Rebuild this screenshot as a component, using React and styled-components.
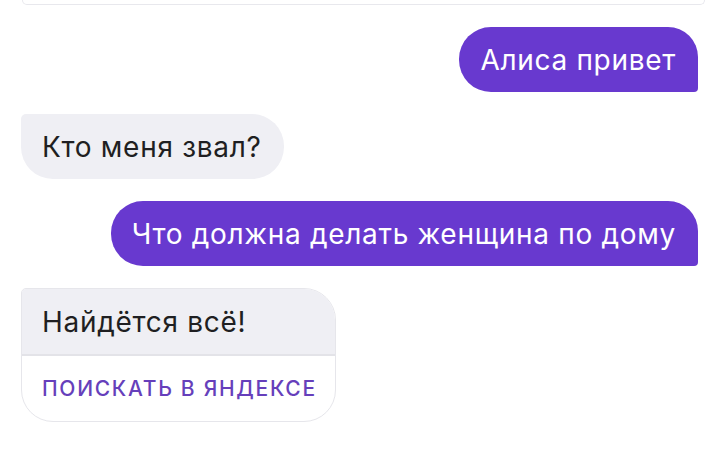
import React from "react";
import styled, { createGlobalStyle } from "styled-components";

const GlobalStyle = createGlobalStyle`
    html, body {
        margin: 0;
        padding: 0;
        background: #ffffff;
    }
    body {
        font-family: Inter, "Noto Sans", sans-serif;
        -webkit-font-smoothing: antialiased;
    }
`;

const Chat = styled.div`
    width: 720px;
    height: 454px;
    overflow: hidden;
    display: flex;
    flex-direction: column;
    gap: 22px;
    padding: 0 22px 0 21px;
    box-sizing: border-box;
`;

// край предыдущей карточки, срезанный сверху
const PrevCard = styled.div`
    flex: none;
    height: 4px;
    margin: 0 -7px 0 1px;
    border: 1.5px solid #e8e8ed;
    border-top: none;
    border-radius: 0 0 12px 12px;
    background: #fff;
`;

const Row = styled.div`
    display: flex;
    justify-content: ${(p) => (p.$own ? "flex-end" : "flex-start")};
`;

const Bubble = styled.div`
    height: 65px;
    display: flex;
    align-items: center;
    padding: 0 22px 0 21px;
    box-sizing: border-box;
    font-size: 28px;
    letter-spacing: 0.7px;
    white-space: nowrap;
    background: ${(p) => (p.$own ? "#6839cf" : "#efeff4")};
    color: ${(p) => (p.$own ? "#ffffff" : "#1f1f22")};
    border-radius: ${(p) => (p.$own ? "32px 30px 4px 32px" : "5px 32px 32px 32px")};
`;

const Card = styled.div`
    width: 315px;
    border-radius: 5px 32px 32px 32px;
    overflow: hidden;
    border: 1.5px solid #e6e6eb;
    box-sizing: border-box;
    background: #fff;
`;

const CardText = styled.div`
    height: 65px;
    display: flex;
    align-items: center;
    padding: 0 20px;
    background: #efeff4;
    border-bottom: 2px solid #e3e3e8;
    font-size: 28px;
    letter-spacing: 0.7px;
    color: #1f1f22;
`;

const CardAction = styled.div`
    height: 65px;
    display: flex;
    align-items: center;
    padding: 0 0 0 20px;
    white-space: nowrap;
    font-size: 21px;
    font-weight: 500;
    letter-spacing: 1.7px;
    text-transform: uppercase;
    color: #663fbb;
`;

export default function App() {
    return (
        <>
            <GlobalStyle />
            <Chat>
                <PrevCard />
                <Row $own>
                    <Bubble $own>Алиса привет</Bubble>
                </Row>
                <Row>
                    <Bubble>Кто меня звал?</Bubble>
                </Row>
                <Row $own>
                    <Bubble $own>Что должна делать женщина по дому</Bubble>
                </Row>
                <Row>
                    <Card>
                        <CardText>Найдётся всё!</CardText>
                        <CardAction>Поискать в Яндексе</CardAction>
                    </Card>
                </Row>
            </Chat>
        </>
    );
}
